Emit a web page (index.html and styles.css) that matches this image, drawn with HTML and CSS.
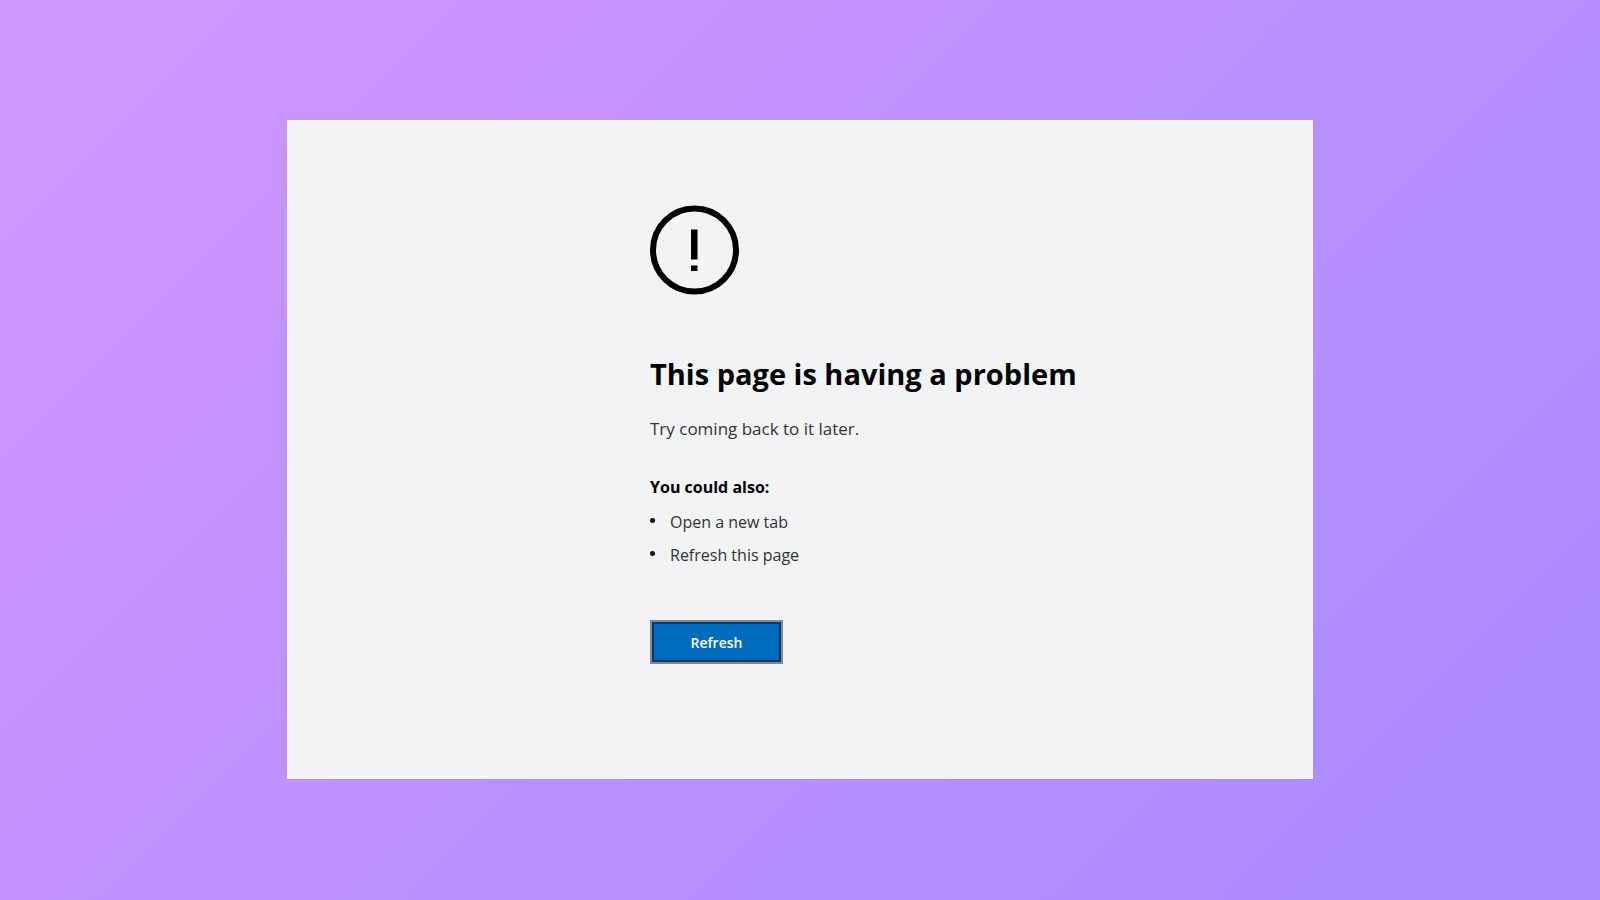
FILE: index.html
```html
<!DOCTYPE html>
<html lang="en">
<head>
  <meta charset="UTF-8">
  <title>This page is having a problem</title>
  <link rel="stylesheet" href="styles.css">
</head>
<body>
<main class="panel">
  <svg class="icon" viewBox="0 0 90 90" aria-hidden="true">
    <circle cx="44.500" cy="45" r="41.500" fill="none" stroke="#000" stroke-width="6"/>
    <path d="M41 24.500h6.500v30h-6.500zM41 60.500h6.500v5.500h-6.500z"/>
  </svg>
  <h1>This page is having a problem</h1>
  <p class="hint">Try coming back to it later.</p>
  <h2>You could also:</h2>
  <ul class="tips">
    <li>Open a new tab</li>
    <li>Refresh this page</li>
  </ul>
  <button type="button" class="refresh" id="refresh">Refresh</button>
</main>

<script>
  document.querySelector("#refresh").onclick = function () {
      location.reload();
  };
</script>
</body>
</html>
```

FILE: styles.css
```css
* {
  box-sizing: border-box;
}

body {
  margin: 0;
  min-height: 100vh;
  padding: 120px 287px 121px;
  display: flex;
  background: linear-gradient(135deg, #cf96ff 0%, #bf91ff 40%, #a98bff 100%);
  font-family: "Segoe UI", "Open Sans", "Noto Sans", sans-serif;
  color: #000;
}

.panel {
  flex: 1;
  display: flex;
  flex-direction: column;
  align-items: flex-start;
  padding: 85px 24px 84px 363px;
  background: #f1f3f5;
}

.icon {
  width: 90px;
  height: 90px;
}

h1 {
  margin: 59px 0 0;
  font-size: 29px;
  line-height: 40px;
  font-weight: 700;
}

.hint {
  margin: 23px 0 0;
  font-size: 17px;
  line-height: 24px;
  color: #333;
}

h2 {
  margin: 34px 0 0;
  font-size: 16px;
  line-height: 24px;
  font-weight: 700;
}

.tips {
  margin: 7px 0 0;
  padding: 0;
  list-style: none;
  font-size: 16px;
  line-height: 33px;
  color: #333;
}

.tips li {
  display: flex;
  align-items: center;
}

.tips li::before {
  content: "";
  width: 5px;
  height: 5px;
  margin: 0 15px 4px 0;
  border-radius: 50%;
  background: #111;
}

.refresh {
  width: 133px;
  height: 44px;
  margin-top: 48px;
  padding: 0;
  border: 2px solid #85898d;
  background: #006cbe;
  box-shadow: inset 0 0 0 2px #063a68;
  color: #fff;
  font-family: inherit;
  font-size: 14px;
  font-weight: 600;
}
```
